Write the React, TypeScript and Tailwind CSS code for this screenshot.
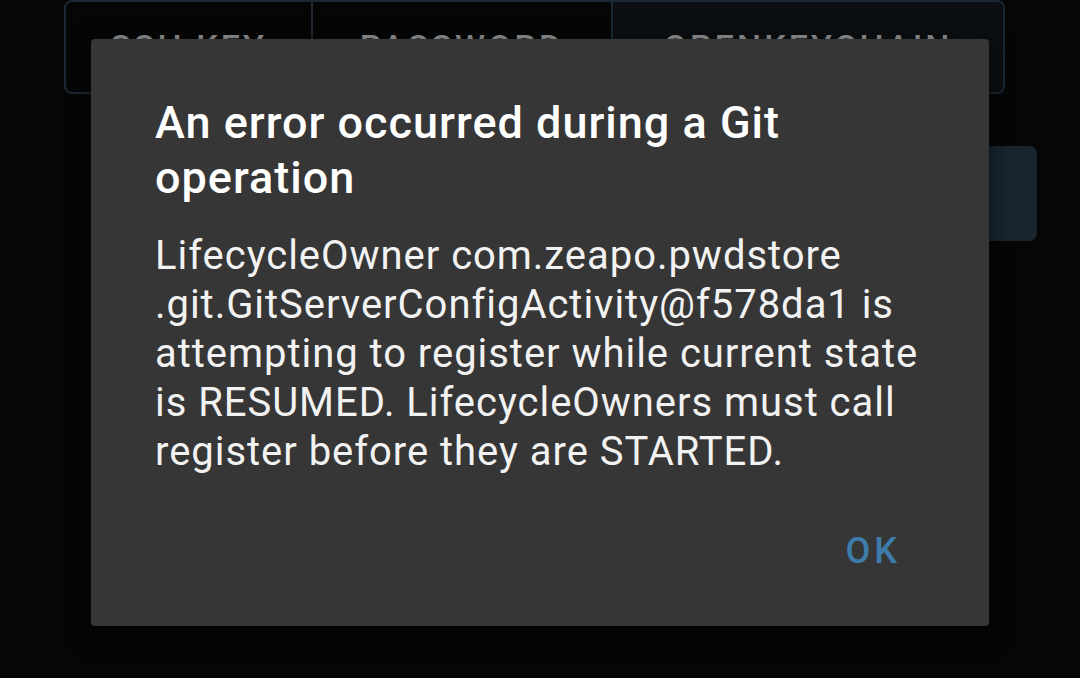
const BODY_LINES = [
  'LifecycleOwner com.zeapo.pwdstore',
  '.git.GitServerConfigActivity@f578da1 is',
  'attempting to register while current state',
  'is RESUMED. LifecycleOwners must call',
  'register before they are STARTED.',
]

const SEGMENTS = ['SSH KEY', 'PASSWORD', 'OPENKEYCHAIN']

export default function App() {
  return (
    <div className="relative w-[1080px] h-[678px] overflow-hidden bg-[#060606] font-['Roboto','Noto_Sans',sans-serif]">
      {/* page behind the dialog */}
      <div className="flex flex-col">
        <div className="ml-[64px] mr-[75px] mt-0 h-[94px] flex rounded-[8px] border-2 border-[#1b2833] overflow-hidden">
          {SEGMENTS.map((s, i) => (
            <div key={s}
              className={`flex items-center justify-center text-[34px] font-medium tracking-[0.09em] text-[#8d8f91] ${
                i === 0 ? 'w-[247px] border-r-2 border-[#1b2833]' : i === 1 ? 'w-[300px] border-r-2 border-[#1b2833]' : 'flex-1 bg-[#0b0e12]'
              }`}>
              {s}
            </div>
          ))}
        </div>
        <div className="flex justify-end mr-[43px] mt-[52px]">
          <div className="w-[420px] h-[95px] rounded-[8px] bg-[#18252f]" />
        </div>
      </div>

      {/* dialog */}
      <div className="absolute left-[91px] top-[39px] w-[898px] h-[587px] rounded-[4px] bg-[#363636] shadow-[0_8px_24px_rgba(0,0,0,0.6)] flex flex-col">
        <div className="pl-[64px] pr-[40px] pt-[56px]">
          <h1 className="text-[45px] leading-[55px] font-medium tracking-[0.022em] text-white">
            An error occurred during a Git<br />operation
          </h1>
          <p className="mt-[26px] text-[40px] leading-[49px] tracking-[0.024em] text-[#f2f2f2]">
            {BODY_LINES.map((l, i) => (
              <span key={i} className="block whitespace-nowrap">{l}</span>
            ))}
          </p>
        </div>
        <div className="mt-auto mb-[48px] flex justify-end pr-[80px]">
          <button className="px-[8px] text-[36px] font-medium tracking-[0.11em] text-[#3d7cab]">OK</button>
        </div>
      </div>
    </div>
  )
}
